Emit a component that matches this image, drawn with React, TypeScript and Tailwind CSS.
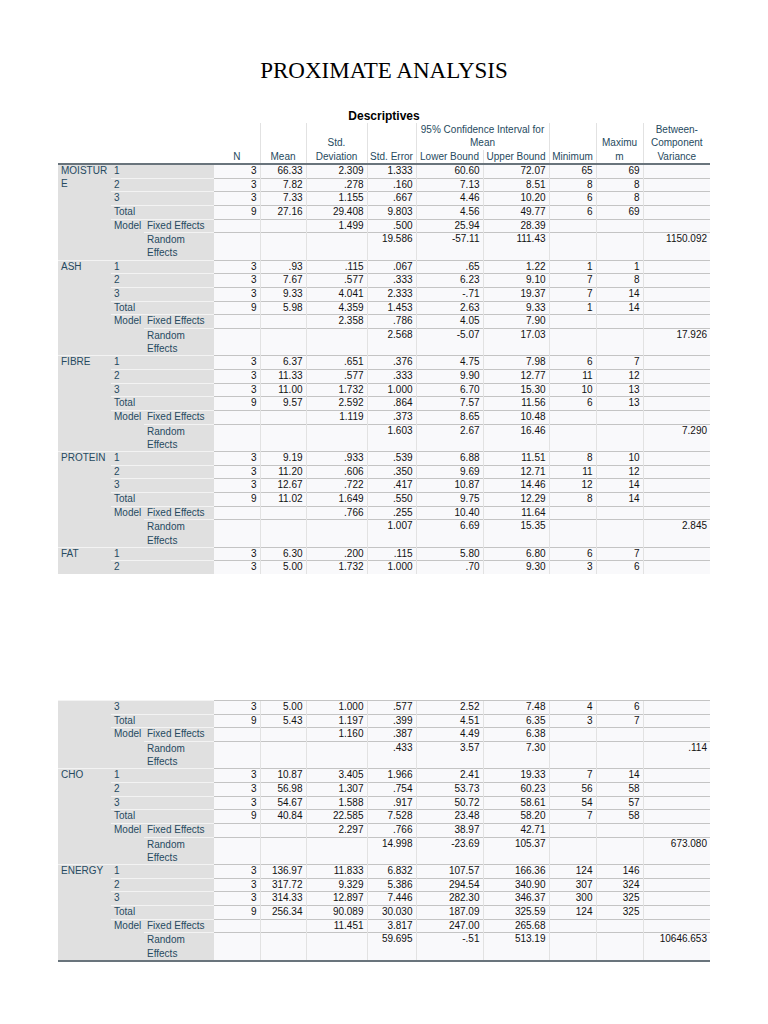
import React from "react"

type Row = { k: string; v: string[] }
type Group = { name: string; rows: Row[] }

const e = ""

// N, Mean, Std. Deviation, Std. Error, Lower, Upper, Min, Max, Between
const page1: Group[] = [
  {
    name: "MOISTURE",
    rows: [
      { k: "1", v: ["3", "66.33", "2.309", "1.333", "60.60", "72.07", "65", "69", e] },
      { k: "2", v: ["3", "7.82", ".278", ".160", "7.13", "8.51", "8", "8", e] },
      { k: "3", v: ["3", "7.33", "1.155", ".667", "4.46", "10.20", "6", "8", e] },
      { k: "Total", v: ["9", "27.16", "29.408", "9.803", "4.56", "49.77", "6", "69", e] },
      { k: "Fixed", v: [e, e, "1.499", ".500", "25.94", "28.39", e, e, e] },
      { k: "Random", v: [e, e, e, "19.586", "-57.11", "111.43", e, e, "1150.092"] },
    ],
  },
  {
    name: "ASH",
    rows: [
      { k: "1", v: ["3", ".93", ".115", ".067", ".65", "1.22", "1", "1", e] },
      { k: "2", v: ["3", "7.67", ".577", ".333", "6.23", "9.10", "7", "8", e] },
      { k: "3", v: ["3", "9.33", "4.041", "2.333", "-.71", "19.37", "7", "14", e] },
      { k: "Total", v: ["9", "5.98", "4.359", "1.453", "2.63", "9.33", "1", "14", e] },
      { k: "Fixed", v: [e, e, "2.358", ".786", "4.05", "7.90", e, e, e] },
      { k: "Random", v: [e, e, e, "2.568", "-5.07", "17.03", e, e, "17.926"] },
    ],
  },
  {
    name: "FIBRE",
    rows: [
      { k: "1", v: ["3", "6.37", ".651", ".376", "4.75", "7.98", "6", "7", e] },
      { k: "2", v: ["3", "11.33", ".577", ".333", "9.90", "12.77", "11", "12", e] },
      { k: "3", v: ["3", "11.00", "1.732", "1.000", "6.70", "15.30", "10", "13", e] },
      { k: "Total", v: ["9", "9.57", "2.592", ".864", "7.57", "11.56", "6", "13", e] },
      { k: "Fixed", v: [e, e, "1.119", ".373", "8.65", "10.48", e, e, e] },
      { k: "Random", v: [e, e, e, "1.603", "2.67", "16.46", e, e, "7.290"] },
    ],
  },
  {
    name: "PROTEIN",
    rows: [
      { k: "1", v: ["3", "9.19", ".933", ".539", "6.88", "11.51", "8", "10", e] },
      { k: "2", v: ["3", "11.20", ".606", ".350", "9.69", "12.71", "11", "12", e] },
      { k: "3", v: ["3", "12.67", ".722", ".417", "10.87", "14.46", "12", "14", e] },
      { k: "Total", v: ["9", "11.02", "1.649", ".550", "9.75", "12.29", "8", "14", e] },
      { k: "Fixed", v: [e, e, ".766", ".255", "10.40", "11.64", e, e, e] },
      { k: "Random", v: [e, e, e, "1.007", "6.69", "15.35", e, e, "2.845"] },
    ],
  },
  {
    name: "FAT",
    rows: [
      { k: "1", v: ["3", "6.30", ".200", ".115", "5.80", "6.80", "6", "7", e] },
      { k: "2", v: ["3", "5.00", "1.732", "1.000", ".70", "9.30", "3", "6", e] },
    ],
  },
]

const page2: Group[] = [
  {
    name: "",
    rows: [
      { k: "3", v: ["3", "5.00", "1.000", ".577", "2.52", "7.48", "4", "6", e] },
      { k: "Total", v: ["9", "5.43", "1.197", ".399", "4.51", "6.35", "3", "7", e] },
      { k: "Fixed", v: [e, e, "1.160", ".387", "4.49", "6.38", e, e, e] },
      { k: "Random", v: [e, e, e, ".433", "3.57", "7.30", e, e, ".114"] },
    ],
  },
  {
    name: "CHO",
    rows: [
      { k: "1", v: ["3", "10.87", "3.405", "1.966", "2.41", "19.33", "7", "14", e] },
      { k: "2", v: ["3", "56.98", "1.307", ".754", "53.73", "60.23", "56", "58", e] },
      { k: "3", v: ["3", "54.67", "1.588", ".917", "50.72", "58.61", "54", "57", e] },
      { k: "Total", v: ["9", "40.84", "22.585", "7.528", "23.48", "58.20", "7", "58", e] },
      { k: "Fixed", v: [e, e, "2.297", ".766", "38.97", "42.71", e, e, e] },
      { k: "Random", v: [e, e, e, "14.998", "-23.69", "105.37", e, e, "673.080"] },
    ],
  },
  {
    name: "ENERGY",
    rows: [
      { k: "1", v: ["3", "136.97", "11.833", "6.832", "107.57", "166.36", "124", "146", e] },
      { k: "2", v: ["3", "317.72", "9.329", "5.386", "294.54", "340.90", "307", "324", e] },
      { k: "3", v: ["3", "314.33", "12.897", "7.446", "282.30", "346.37", "300", "325", e] },
      { k: "Total", v: ["9", "256.34", "90.089", "30.030", "187.09", "325.59", "124", "325", e] },
      { k: "Fixed", v: [e, e, "11.451", "3.817", "247.00", "265.68", e, e, e] },
      { k: "Random", v: [e, e, e, "59.695", "-.51", "513.19", e, e, "10646.653"] },
    ],
  },
]

const widths = [53, 33, 70, 46, 46, 61, 49, 67, 66, 47, 47, 67]

function Cols() {
  return (
    <colgroup>
      {widths.map((w, i) => (
        <col key={i} style={{ width: w }} />
      ))}
    </colgroup>
  )
}

const lbl = "bg-[#e0e0e0] text-[#264a60] align-top text-left px-[3px] border-t border-[#f3f3f3]"
const num = "bg-[#f9f9fb] text-[#111] align-top text-right px-[3px] border-t border-[#c4c4c4]"

function GroupRows({ g, gray }: { g: Group; gray?: boolean }) {
  const top = gray ? "border-[#c4c4c4]" : ""
  return (
    <>
      {g.rows.map((r, i) => (
        <tr key={i} className="leading-[12.67px]">
          {i === 0 && (
            <td rowSpan={g.rows.length} className={`${lbl} ${top} break-all`}>
              {g.name}
            </td>
          )}
          {r.k === "Fixed" ? (
            <>
              <td rowSpan={2} className={`${lbl} ${i === 0 ? top : ""}`}>
                Model
              </td>
              <td className={`${lbl} ${i === 0 ? top : ""}`}>Fixed Effects</td>
            </>
          ) : r.k === "Random" ? (
            <td className={`${lbl} leading-[13.17px]`}>Random Effects</td>
          ) : (
            <td colSpan={2} className={`${lbl} ${i === 0 ? top : ""}`}>
              {r.k}
            </td>
          )}
          {r.v.map((x, j) => (
            <td key={j} className={`${num} ${j > 0 ? "border-l border-l-[#e2e2e2]" : ""}`}>
              {x}
            </td>
          ))}
        </tr>
      ))}
    </>
  )
}

const th = "font-normal text-[#264a60] text-center align-bottom px-[2px] border-b-2 border-b-[#69747c]"
const thl = "border-l border-l-[#e2e2e2]"

export default function App() {
  return (
    <div className="w-[768px] min-h-[1024px] bg-white font-['Liberation_Sans',Arial,sans-serif] text-[10px]">
      <div className="pt-[57px] text-center font-['Liberation_Serif','Times_New_Roman',serif] text-[23px] leading-[28px] text-black">
        PROXIMATE ANALYSIS
      </div>
      <div className="mt-[24px] text-center text-[12px] leading-[14px] font-bold text-black">Descriptives</div>

      <table className="ml-[58px] w-[652px] table-fixed border-collapse">
        <Cols />
        <thead className="leading-[13.3px]">
          <tr>
            <th colSpan={3} rowSpan={2} className={th}></th>
            <th rowSpan={2} className={th}>N</th>
            <th rowSpan={2} className={`${th} ${thl}`}>Mean</th>
            <th rowSpan={2} className={`${th} ${thl}`}>Std. Deviation</th>
            <th rowSpan={2} className={`${th} ${thl}`}>Std. Error</th>
            <th colSpan={2} className={`font-normal text-[#264a60] text-center align-bottom px-[2px] ${thl}`}>
              95% Confidence Interval for Mean
            </th>
            <th rowSpan={2} className={`${th} ${thl}`}>Minimum</th>
            <th rowSpan={2} className={`${th} ${thl} break-all`}>Maximum</th>
            <th rowSpan={2} className={`${th} ${thl}`}>Between-Component Variance</th>
          </tr>
          <tr>
            <th className={`${th} ${thl} whitespace-nowrap`}>Lower Bound</th>
            <th className={`${th} ${thl} whitespace-nowrap`}>Upper Bound</th>
          </tr>
        </thead>
        <tbody>
          {page1.map((g) => (
            <GroupRows key={g.name} g={g} />
          ))}
        </tbody>
      </table>

      <table className="mt-[126px] ml-[58px] w-[652px] table-fixed border-collapse border-b-2 border-b-[#69747c]">
        <Cols />
        <tbody>
          {page2.map((g, i) => (
            <GroupRows key={i} g={g} gray={i === 0} />
          ))}
        </tbody>
      </table>
    </div>
  )
}
